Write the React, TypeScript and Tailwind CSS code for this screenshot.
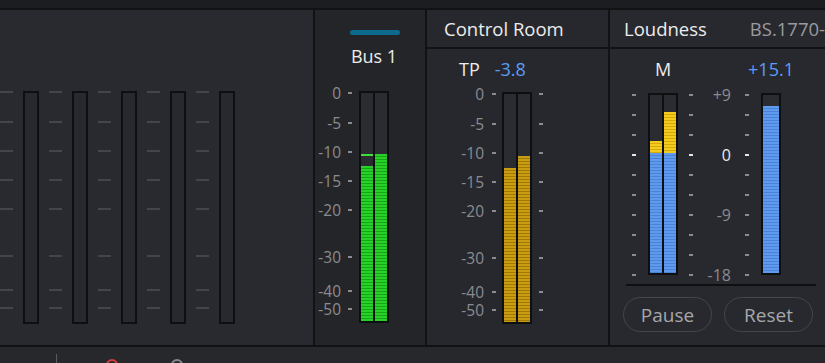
import React from "react";

// dB scale tick offsets (px from meter top) for the 0..-50 meters
const DB_TICKS = [
  { label: "0", y: 0 },
  { label: "-5", y: 30 },
  { label: "-10", y: 59 },
  { label: "-15", y: 88 },
  { label: "-20", y: 117 },
  { label: "-30", y: 164 },
  { label: "-40", y: 198 },
  { label: "-50", y: 216 },
];

// loudness scale: ten ticks, 20px apart
const LU_TICKS = Array.from({ length: 10 }, (_, i) => i * 20);
const LU_LABELS: Record<number, string> = { 0: "+9", 60: "0", 120: "-9", 180: "-18" };

const GREEN =
  "bg-[image:repeating-linear-gradient(to_bottom,#27d127_0px,#27d127_2px,#16a616_2px,#16a616_3px)]";
const GOLD =
  "bg-[image:repeating-linear-gradient(to_bottom,#c99c12_0px,#c99c12_2px,#9e7908_2px,#9e7908_3px)]";
const BLUE =
  "bg-[image:repeating-linear-gradient(to_bottom,#5e9aee_0px,#5e9aee_2px,#4a83d8_2px,#4a83d8_3px)]";
const YELLOW =
  "bg-[image:repeating-linear-gradient(to_bottom,#f4cb1c_0px,#f4cb1c_2px,#d4a90e_2px,#d4a90e_3px)]";

type Fill = { top: number; bottom?: number; cls: string };

function Channel({ h, fills = [], empty = "bg-[#2b2c31]", w = "w-[12px]" }: { h: number; fills?: Fill[]; empty?: string; w?: string }) {
  return (
    <div className={`relative ${w} ${empty}`} style={{ height: h }}>
      {fills.map((f, i) => (
        <div
          key={i}
          className={`absolute left-0 right-0 ${f.cls}`}
          style={{ top: f.top, bottom: f.bottom ?? 0 }}
        />
      ))}
    </div>
  );
}

function Pair({ h, left, right }: { h: number; left: Fill[]; right: Fill[] }) {
  return (
    <div className="flex gap-[2px] border-2 border-[#0e0f11] bg-[#0e0f11]">
      <Channel h={h} fills={left} />
      <Channel h={h} fills={right} />
    </div>
  );
}

function DbLabels({ h, w }: { h: number; w: string }) {
  return (
    <div className={`relative ${w}`} style={{ height: h }}>
      {DB_TICKS.map((t) => (
        <div
          key={t.label}
          className="absolute right-0 h-[14px] whitespace-nowrap text-[15.5px] leading-[14px] text-[#8a8b90]"
          style={{ top: t.y + 2 - 7 }}
        >
          {t.label}
        </div>
      ))}
    </div>
  );
}

function Dashes({ h, ticks, white = -1, color = "bg-[#8a8b90]" }: { h: number; ticks: number[]; white?: number; color?: string }) {
  return (
    <div className="relative w-[4px]" style={{ height: h }}>
      {ticks.map((y) => (
        <div
          key={y}
          className={`absolute left-0 h-[2px] w-[4px] ${y === white ? "bg-[#e6e6e6]" : color}`}
          style={{ top: y + 1 }}
        />
      ))}
    </div>
  );
}

function LeftMeters() {
  const h = 233;
  const ys = DB_TICKS.map((t) => t.y);
  const tick = (
    <div className="relative w-[13px]" style={{ height: h }}>
      {ys.map((y) => (
        <div key={y} className="absolute left-0 h-[2px] w-[13px] bg-[#44454a]" style={{ top: y }} />
      ))}
    </div>
  );
  return (
    <div className="mt-[81px] flex gap-[10px]">
      {[0, 1, 2, 3, 4].map((i) => (
        <React.Fragment key={i}>
          {tick}
          <div className="border-2 border-[#0e0f11]">
            <Channel h={h - 4} empty="bg-[#28292e]" />
          </div>
        </React.Fragment>
      ))}
    </div>
  );
}

export default function App() {
  const dbH = 228;
  return (
    <div className="flex h-[363px] w-[825px] flex-col overflow-hidden bg-[#27282c] font-['Open_Sans',sans-serif]">
      {/* top strip */}
      <div className="h-[10px] shrink-0 border-b-2 border-[#111214] bg-[#1c1d20]" />

      <div className="flex h-[335px] shrink-0">
        {/* track meters */}
        <div className="w-[313px] shrink-0 bg-[#292a2f]">
          <LeftMeters />
        </div>

        {/* Bus 1 */}
        <div className="w-[114px] shrink-0 border-x-2 border-[#111214] bg-[#242529]">
          <div className="ml-[35px] mt-[20px] h-[5px] w-[50px] rounded-full bg-[#0c6a8e]" />
          <div className="mt-[10px] w-[110px] pl-[8px] text-center text-[18px] leading-[22px] text-[#ececec]">
            Bus 1
          </div>
          <div className="mt-[24px] flex">
            <DbLabels h={dbH} w="w-[26px]" />
            <div className="ml-[7px]">
              <Dashes h={dbH} ticks={DB_TICKS.map((t) => t.y)} />
            </div>
            <div className="ml-[7px]">
              <Pair
                h={dbH}
                left={[
                  { top: 61, bottom: 165, cls: "bg-[#3be03b]" },
                  { top: 73, cls: GREEN },
                ]}
                right={[{ top: 61, cls: GREEN }]}
              />
            </div>
          </div>
        </div>

        {/* Control Room */}
        <div className="flex w-[183px] shrink-0 flex-col border-r-2 border-[#111214] bg-[#27282d]">
          <div className="flex h-[39px] items-center border-b-2 border-[#111214] pl-[17px] text-[18.5px] text-[#ececec]">
            Control Room
          </div>
          <div className="ml-[32px] mt-[8px] flex h-[24px] items-center text-[18px] leading-[24px]">
            <span className="text-[#ececec]">TP</span>
            <span className="ml-[15px] text-[#5b9cf6]">-3.8</span>
          </div>
          <div className="mt-[11px] flex">
            <DbLabels h={dbH} w="w-[57px]" />
            <div className="ml-[8px]">
              <Dashes h={dbH} ticks={DB_TICKS.map((t) => t.y)} />
            </div>
            <div className="ml-[6px]">
              <Pair h={dbH} left={[{ top: 74, cls: GOLD }]} right={[{ top: 62, cls: GOLD }]} />
            </div>
            <div className="ml-[7px]">
              <Dashes h={dbH} ticks={DB_TICKS.map((t) => t.y)} />
            </div>
          </div>
        </div>

        {/* Loudness */}
        <div className="flex min-w-0 flex-1 flex-col bg-[#28292e]">
          <div className="flex h-[39px] items-center whitespace-nowrap border-b-2 border-[#111214] pl-[14px] text-[18.5px]">
            <span className="text-[#ececec]">Loudness</span>
            <span className="ml-[43px] text-[#9a9ba0]">BS.1770-</span>
          </div>

          <div className="mt-[8px] flex h-[24px] items-center text-[18px] leading-[24px]">
            <div className="ml-[38px] w-[30px] text-center text-[#ececec]">M</div>
            <div className="ml-[83px] flex w-[20px] justify-center whitespace-nowrap text-[#5b9cf6]">+15.1</div>
          </div>

          <div className="mt-[12px] flex">
            <div className="ml-[22px]">
              <Dashes h={182} ticks={LU_TICKS} white={60} />
            </div>
            <div className="ml-[12px]">
              <Pair
                h={178}
                left={[
                  { top: 46, cls: YELLOW },
                  { top: 58, cls: BLUE },
                ]}
                right={[
                  { top: 17, cls: YELLOW },
                  { top: 58, cls: BLUE },
                ]}
              />
            </div>
            <div className="ml-[11px]">
              <Dashes h={182} ticks={LU_TICKS} white={60} />
            </div>
            <div className="relative ml-[6px] w-[32px]" style={{ height: 182 }}>
              {LU_TICKS.filter((y) => LU_LABELS[y]).map((y) => (
                <div
                  key={y}
                  className={`absolute right-0 h-[18px] text-[16px] leading-[18px] ${y === 60 ? "text-[#ececec]" : "text-[#8a8b90]"}`}
                  style={{ top: y + 2 - 9 }}
                >
                  {LU_LABELS[y]}
                </div>
              ))}
            </div>
            <div className="ml-[14px]">
              <Dashes h={182} ticks={LU_TICKS} white={60} />
            </div>
            <div className="ml-[12px] border-2 border-[#0e0f11]">
              <Channel h={178} w="w-[16px]" fills={[{ top: 11, cls: BLUE }]} />
            </div>
          </div>

          <div className="ml-[16px] mt-[9px] h-[2px] w-[190px] bg-[#0e0f11]" />

          <div className="ml-[13px] mt-[11px] flex gap-[12px]">
            <button className="h-[35px] w-[89px] rounded-full border-[1.5px] border-[#45464b] text-[19px] leading-[24px] text-[#a6a7ab]">
              Pause
            </button>
            <button className="h-[35px] w-[89px] rounded-full border-[1.5px] border-[#45464b] text-[19px] leading-[24px] text-[#a6a7ab]">
              Reset
            </button>
          </div>
        </div>
      </div>

      {/* bottom toolbar (cut off) */}
      <div className="flex h-[18px] shrink-0 items-start overflow-hidden border-t-2 border-[#111214] bg-[#27282c]">
        <div className="ml-[56px] mt-[7px] h-[12px] w-[1px] bg-[#5a5b60]" />
        <div className="ml-[49px] mt-[12px] h-[12px] w-[12px] shrink-0 rounded-full border-2 border-[#d83a3a]" />
        <div className="ml-[53px] mt-[12px] h-[12px] w-[12px] shrink-0 rounded-full border-2 border-[#86878c]" />
      </div>
    </div>
  );
}
